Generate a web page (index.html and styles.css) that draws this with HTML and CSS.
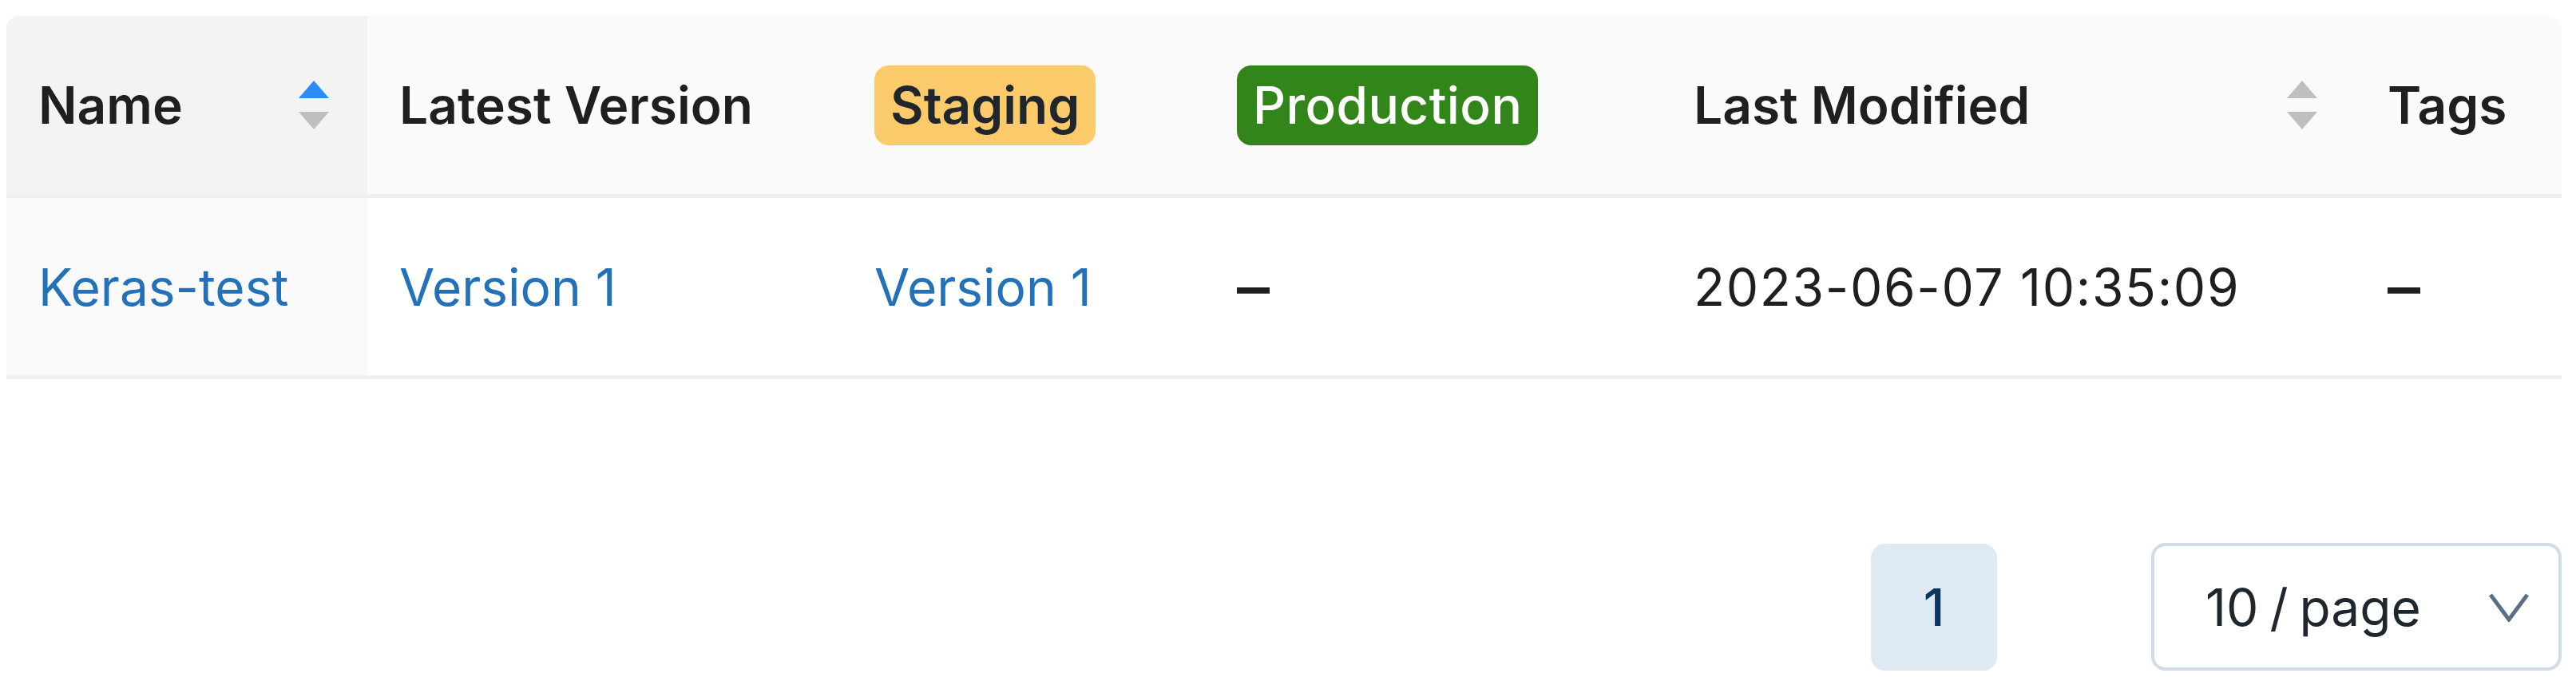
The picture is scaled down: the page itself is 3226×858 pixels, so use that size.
FILE: index.html
```html
<!DOCTYPE html>
<html lang="en">
<head>
<meta charset="utf-8">
<title>Registered Models</title>
<link rel="stylesheet" href="styles.css">
</head>
<body>
<div class="page">
  <table class="models">
    <colgroup>
      <col class="c-name">
      <col class="c-latest">
      <col class="c-staging">
      <col class="c-prod">
      <col class="c-mod">
      <col class="c-tags">
    </colgroup>
    <thead>
      <tr>
        <th class="sorted">
          <div class="th-sort">
            <span>Name</span>
            <span class="sorter">
              <svg class="tri up active" viewBox="0 0 38 22"><polygon points="19,0 38,22 0,22"/></svg>
              <svg class="tri down" viewBox="0 0 38 22"><polygon points="0,0 38,0 19,22"/></svg>
            </span>
          </div>
        </th>
        <th>Latest Version</th>
        <th><span class="badge staging">Staging</span></th>
        <th><span class="badge production">Production</span></th>
        <th>
          <div class="th-sort">
            <span>Last Modified</span>
            <span class="sorter">
              <svg class="tri up" viewBox="0 0 38 22"><polygon points="19,0 38,22 0,22"/></svg>
              <svg class="tri down" viewBox="0 0 38 22"><polygon points="0,0 38,0 19,22"/></svg>
            </span>
          </div>
        </th>
        <th>Tags</th>
      </tr>
    </thead>
    <tbody>
      <tr>
        <td class="sorted"><a href="#">Keras-test</a></td>
        <td><a href="#">Version 1</a></td>
        <td><a href="#">Version 1</a></td>
        <td><span class="dash">–</span></td>
        <td><span class="date">2023-06-07 10:35:09</span></td>
        <td><span class="dash">–</span></td>
      </tr>
    </tbody>
  </table>

  <div class="pager">
    <span class="page-item active">1</span>
    <div class="size-select">
      <span class="size-label">10 / page</span>
      <svg class="chev" viewBox="0 0 52 37"><polyline points="3,3 26,34 49,3"/></svg>
    </div>
  </div>
</div>
</body>
</html>
```

FILE: styles.css
```css
html, body {
  margin: 0;
  padding: 0;
  background: #ffffff;
}

body {
  font-family: Inter, "Liberation Sans", Arial, sans-serif;
  font-size: 64px;
  color: #1f1f1f;
}

.page {
  padding: 20px 18px 0 8px;
}

.models {
  width: 3200px;
  table-layout: fixed;
  border-collapse: separate;
  border-spacing: 0;
}

.c-name { width: 452px; }
.c-latest { width: 595px; }
.c-staging { width: 454px; }
.c-prod { width: 572px; }
.c-mod { width: 869px; }
.c-tags { width: 258px; }

.models th,
.models td {
  text-align: left;
  vertical-align: middle;
  padding: 0 40px;
  border-bottom: 5px solid #f0f0f0;
  white-space: nowrap;
  line-height: 77px;
}

.models th {
  height: 223px;
  background: #fafafa;
  font-weight: 600;
  color: #1f1f1f;
}

.models td {
  height: 222px;
  background: #ffffff;
  font-weight: 400;
}

.models th:first-child { border-top-left-radius: 16px; }
.models th:last-child { border-top-right-radius: 16px; }

.models th.sorted { background: #f3f3f3; }
.models td.sorted { background: #fafafa; }

.models th .th-sort {
  display: flex;
  align-items: center;
  justify-content: space-between;
  margin-right: 8px;
}

.sorter {
  display: flex;
  flex-direction: column;
  gap: 17px;
}

.tri {
  display: block;
  width: 38px;
  height: 22px;
  fill: #bfbfbf;
}

.tri.active { fill: #2a8cf8; }

.models a {
  color: #2372b9;
  text-decoration: none;
}

.date {
  letter-spacing: 1.7px;
}

.dash {
  display: inline-block;
  font-size: 82px;
  font-weight: 500;
  line-height: 77px;
  vertical-align: top;
}

.badge {
  display: inline-block;
  padding: 11px 20px 12px;
  border-radius: 18px;
  line-height: 77px;
}

.badge.staging {
  background: #fbca6b;
  color: #1f272d;
  font-weight: 600;
}

.badge.production {
  background: #328518;
  color: #ffffff;
  font-weight: 500;
  letter-spacing: 0.4px;
}

.pager {
  display: flex;
  justify-content: flex-end;
  align-items: center;
  gap: 193px;
  margin-top: 205px;
  width: 3200px;
}

.page-item {
  width: 158px;
  height: 159px;
  display: flex;
  align-items: center;
  justify-content: center;
  background: #dde9f3;
  color: #0c3660;
  border-radius: 18px;
  font-weight: 500;
}

.size-select {
  box-sizing: border-box;
  width: 514px;
  height: 160px;
  border: 4px solid #cfdce7;
  border-radius: 18px;
  display: flex;
  align-items: center;
  justify-content: space-between;
  padding: 0 36px 0 64px;
  color: #1f272d;
}

.size-label {
  word-spacing: -4px;
}

.chev {
  width: 52px;
  height: 37px;
  fill: none;
  stroke: #5b6f80;
  stroke-width: 5;
}
```
